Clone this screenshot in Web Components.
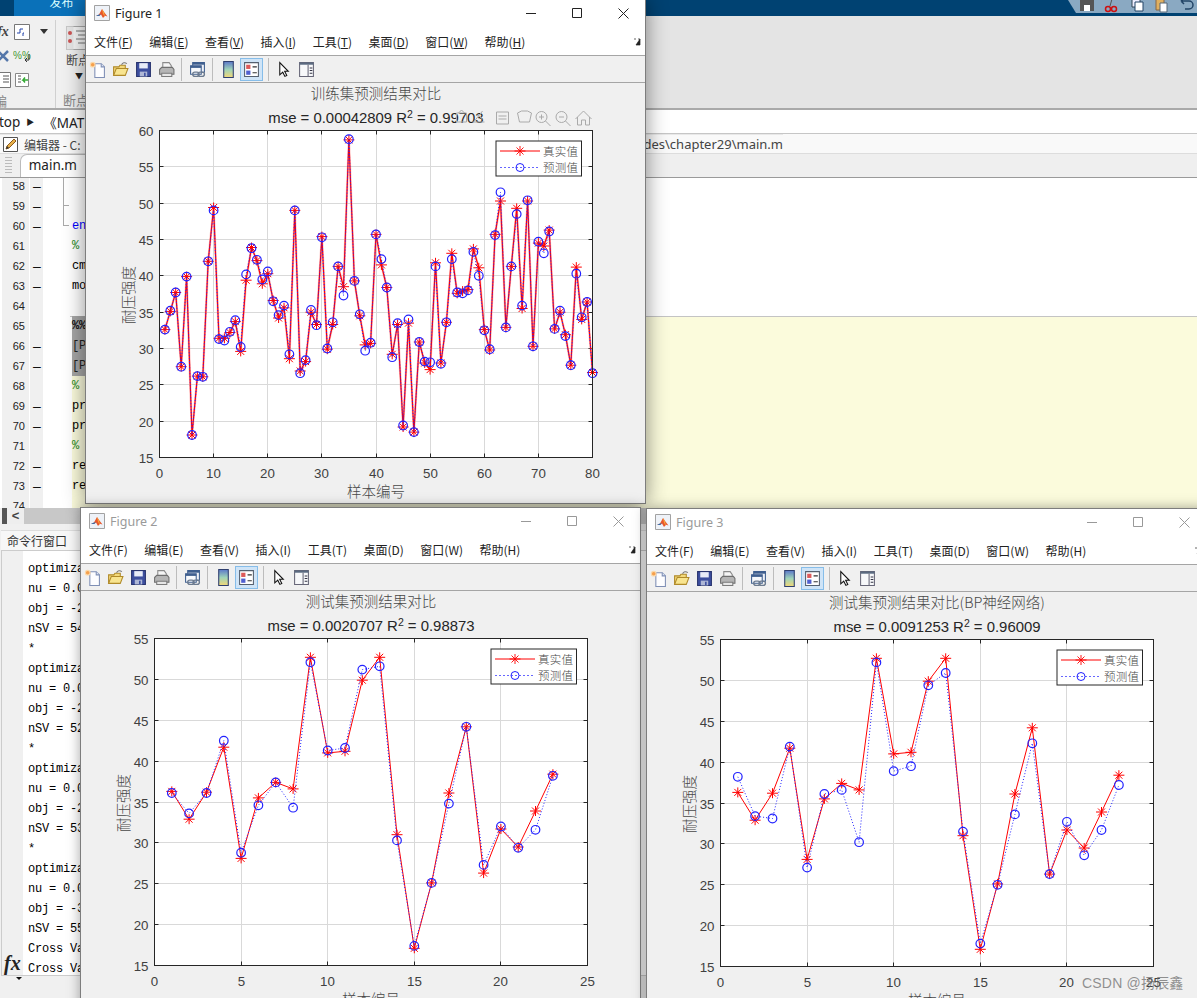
<!DOCTYPE html>
<html lang="zh">
<head>
<meta charset="utf-8">
<title>MATLAB Figures</title>
<style>
  html, body { margin: 0; background: #f0f0f0; overflow: hidden; }
</style>
</head>
<body>
<ml-desktop>
  <ml-ribbon></ml-ribbon>
  <ml-address></ml-address>
  <ml-editor></ml-editor>
  <ml-command></ml-command>
  <fig-window name="Figure 1" x="85" y="-1" h="505" active>
    <fig-plot series="train" x-max="80" x-step="10" y-max="60" tools
      heading="训练集预测结果对比" mse="0.00042809" r2="0.99703"></fig-plot>
  </fig-window>
  <fig-window name="Figure 2" x="80" y="507" h="520">
    <fig-plot series="test" x-max="25" x-step="5" y-max="55"
      heading="测试集预测结果对比" mse="0.0020707" r2="0.98873"></fig-plot>
  </fig-window>
  <fig-window name="Figure 3" x="646" y="508" h="520">
    <fig-plot series="bp" x-max="25" x-step="5" y-max="55"
      heading="测试集预测结果对比(BP神经网络)" mse="0.0091253" r2="0.96009"></fig-plot>
  </fig-window>
  <ml-watermark>CSDN @扬辰鑫</ml-watermark>
</ml-desktop>

<script>
const CJK = '"Noto Sans CJK SC", "Noto Sans", sans-serif';
const MONO = '"Liberation Mono", monospace';

// measured from the reference: [real, predicted]
const TRAIN_REAL = [32.6,35.1,37.7,27.5,39.9,18.1,26.2,26.1,42,49.4,31.4,31.4,32.2,33.7,29.6,39.4,43.9,42.1,38.9,40.3,36.6,34.2,35.6,28.6,49,26.9,28.2,35,33.3,45.4,29.9,33.3,41.3,38.5,58.7,39.3,34.5,30.5,30.7,45.7,41.5,38.4,29.2,33.3,19.2,33.5,18.5,30.9,28,27.1,41.8,28,33.6,43.1,37.6,37.9,38.1,43.7,41.1,32.6,29.8,45.7,50.3,32.9,41.3,49.3,35.5,50.3,30.3,44.5,44.1,46.3,32.7,35,31.9,27.7,41.2,34,36.4,26.7];
const TRAIN_PRED = [32.6,35.2,37.7,27.5,39.9,18.1,26.2,26.1,42,49,31.3,31.1,32.3,33.9,30.2,40.2,43.8,42.2,39.5,40.6,36.5,34.6,35.9,29.2,49,26.6,28.4,35.3,33.2,45.3,30,33.6,41.3,37.3,58.8,39.3,34.7,29.7,30.8,45.7,42.3,38.4,28.8,33.5,19.4,34,18.5,30.9,28.2,28.1,41.3,27.9,33.6,42.3,37.7,37.6,38,43.3,40,32.5,29.9,45.6,51.5,32.9,41.3,48.5,35.9,50.4,30.3,44.7,43.1,46.1,32.7,35.2,31.7,27.7,40.3,34.3,36.4,26.6];
const TEST_REAL = [36.3,32.9,36.2,41.7,28.1,35.5,37.4,36.6,52.7,41,41.2,49.9,52.7,31,17.1,25.1,36.1,44.2,26.3,31.7,29.5,33.9,38.4];
const TEST_PRED = [36.1,33.6,36.1,42.5,28.8,34.6,37.4,34.3,52.1,41.3,41.6,51.2,51.6,30.3,17.4,25.1,34.8,44.2,27.3,32,29.4,31.6,38.2];
const BP_PRED = [38.2,33.4,33.1,41.9,27.1,36.1,36.6,30.2,52.2,38.9,39.5,49.4,50.9,31.5,17.8,25,33.6,42.3,26.3,32.7,28.6,31.7,37.2];
const SERIES = {
  train: [TRAIN_REAL, TRAIN_PRED],
  test: [TEST_REAL, TEST_PRED],
  bp: [TEST_REAL, BP_PRED],
};

const FIG_ICONS = {
  new: `<path d="M5.5 2.5h6l3 3v10h-9z" fill="#fdfdff" stroke="#7f8fb5"/><path d="M11.5 2.5v3h3" fill="#dfe6f5" stroke="#7f8fb5"/><circle cx="3.5" cy="3.5" r="2.2" fill="#f6a04d" stroke="#fbd9a8"/>`,
  open: `<path d="M1.5 13.5v-8h5l1-1.5h5v3" fill="#f3d97a" stroke="#b08a2a"/><path d="M1.5 13.5l2.5-6.5h11l-2.5 6.5z" fill="#f8e48f" stroke="#b08a2a"/><path d="M9 3.5c1-2 3-2.500 5-1" fill="none" stroke="#777"/>`,
  save: `<path d="M1.500 1.500h13v13h-13z" fill="#3d4f9f" stroke="#29356f"/><path d="M4 2h8v5h-8z" fill="#e8ecf8"/><path d="M4.500 10h7v4.500h-7z" fill="#aeb7d6"/><path d="M8.500 11h1.500v3h-1.500z" fill="#3d4f9f"/>`,
  print: `<path d="M4.500 1.500h6l2 3v3h-8z" fill="#f5f5f5" stroke="#8a8a8a"/><path d="M1.500 8l2-2h10l1.500 2v4.500h-13.500z" fill="#b5b5b5" stroke="#6f6f6f"/><path d="M3.500 11.500h9.500v3h-9.500z" fill="#e6e6e6" stroke="#7b7b7b"/>`,
  link: `<path d="M3.500 1.500h11v9h-11z" fill="#eef1f7" stroke="#3f5f8f"/><path d="M3.500 1.500h11v2h-11z" fill="#3f5f8f"/><path d="M1.500 4.500h10v8h-10z" fill="#f7f9fc" stroke="#3f5f8f"/><path d="M1.500 4.500h10v2h-10z" fill="#3f5f8f"/><rect x="3.500" y="10.500" width="6" height="4" rx="2" fill="none" stroke="#6c7b8f" stroke-width="1.300"/><rect x="8.500" y="10.500" width="6" height="4" rx="2" fill="none" stroke="#6c7b8f" stroke-width="1.300"/>`,
  colorbar: `<defs><linearGradient id="cb" x1="0" y1="0" x2="0" y2="1"><stop offset="0" stop-color="#5b78c9"/><stop offset=".5" stop-color="#9fd3b8"/><stop offset="1" stop-color="#f1d878"/></linearGradient></defs><path d="M3.500 .500h9v15h-9z" fill="url(#cb)" stroke="#2f3f6f"/>`,
  legend: `<path d="M1.500 1.500h13v13h-13z" fill="#fff" stroke="#55606f"/><path d="M3 3.500h4v4h-4z" fill="#dd5a5a"/><path d="M3 9h4v4h-4z" fill="#5060d0"/><path d="M9 5.500h4M9 11h4" stroke="#333"/>`,
  arrow: `<path d="M4.500 1.500v11.500l2.800-2.500 2 4 1.800-.8-2-4h3.400z" fill="#fff" stroke="#111"/>`,
  panel: `<path d="M1.500 1.500h13v13h-13z" fill="#f7f8fa" stroke="#667"/><path d="M1.500 1.500h13v2h-13z" fill="#5a6a80"/><path d="M9.500 3.500v11" stroke="#667"/><path d="M11 6.500h2.500M11 9h2.500M11 11.500h2.500" stroke="#334"/>`,
};

/** 背景：顶部功能区 */
class MlRibbon extends HTMLElement {
  connectedCallback() {
    this.attachShadow({ mode: 'open' }).innerHTML = `
    <style>
      :host { display: block; height: 110px; background: #e4e4e4; font: 12px ${CJK}; color: #444; overflow: hidden; }
      .tabs { height: 16px; background: #004272; position: relative; }
      .publish { position: absolute; left: 14px; top: 0; width: 71px; height: 16px; background: #0a71b9;
        color: #dff; text-align: center; line-height: 8px; font-size: 12px; padding-left: 24px; box-sizing: border-box; }
      .publish span { display: block; margin-top: -2px; }
      .qat { position: absolute; left: 1068px; right: 0; top: 0; height: 13px; background: #8aa9c2;
        clip-path: polygon(0 0, 100% 0, 100% 100%, 8px 100%); }
      .qat svg { position: absolute; top: -3px; }
      .body { height: 92px; display: flex; background: linear-gradient(90deg, #f0f0f0 640px, #e4e4e4 640px); border-bottom: 2px solid #a9a9a9; box-sizing: content-box; }
      .group { width: 55px; height: 88px; flex: none; border-right: 1px solid #d0d0d0; margin-top: 4px; display: flex; flex-direction: column; justify-content: space-between; }
      .grid { display: grid; grid-template-columns: 19px 19px 24px; grid-auto-rows: 24px; margin: 0 0 0 -6.5px; place-items: center; }
      .grp-name { color: #888; font-size: 13px; line-height: 17px; text-align: left; margin-left: -6px; }
      .bp { width: 60px; flex: none; margin-left: 10px; display: flex; flex-direction: column; align-items: flex-start; padding-top: 10px; height: 82px; }
      .bp .t { margin-top: 2px; line-height: 16px; }
      .bp .arr { font-size: 8px; margin-left: 9px; margin-top: 2px; color: #222; }
      .bp .n { margin-top: auto; margin-left: -3px; color: #888; font-size: 13px; line-height: 17px; }
    </style>
    <div class="tabs">
      <div class="publish"><span>发布</span></div>
      <div class="qat">
        <svg style="left:10px" width="18" height="16" viewBox="0 0 18 16"><path d="M2 2h14v12h-14z" fill="#555"/><path d="M6 8h6v6h-6z" fill="#fff"/></svg>
        <svg style="left:36px" width="14" height="16" viewBox="0 0 14 16"><path d="M8 2l-2 7" stroke="#555"/><circle cx="4" cy="12" r="2.500" fill="none" stroke="#c11" stroke-width="1.500"/><circle cx="10" cy="12" r="2.500" fill="none" stroke="#c11" stroke-width="1.500"/></svg>
        <svg style="left:62px" width="14" height="16" viewBox="0 0 14 16"><path d="M2 2h8v8h-8z" fill="#eef" stroke="#345"/><path d="M5 5h8v9h-8z" fill="#fff" stroke="#246"/></svg>
        <svg style="left:86px" width="14" height="16" viewBox="0 0 14 16"><path d="M2 2h8v11h-8z" fill="#e0b060" stroke="#864"/><path d="M6 6h7v9h-7z" fill="#fff" stroke="#567"/></svg>
        <svg style="left:108px" width="18" height="16" viewBox="0 0 18 16"><path d="M5 4h8a3.500 3.500 0 0 1 0 8h-4M5 4l3-3M5 4l3 3" fill="none" stroke="#246" stroke-width="1.500"/></svg>
      </div>
    </div>
    <div class="body">
      <div class="group">
        <div class="grid">
          <span style="font:italic bold 14px 'Liberation Serif'">fx</span>
          <svg width="16" height="16" viewBox="0 0 16 16"><path d="M.5.500h15v15h-15z" fill="#fff" stroke="#777"/><path d="M3 9h3V5h3M9 12V9h1" fill="none" stroke="#24a"/></svg>
          <svg width="10" height="6" viewBox="0 0 10 6"><path d="M1 0h8L5 5z" fill="#333"/></svg>
          <svg width="16" height="16" viewBox="0 0 16 16"><path d="M3 3l10 10M13 3L3 13" stroke="#57a" stroke-width="2.500"/></svg>
          <svg width="18" height="16" viewBox="0 0 18 16"><text x="0" y="11" font-size="10" fill="#493" font-family="Liberation Sans">%%</text><path d="M12 12h4V6M12 12l2-2M12 12l2 2" fill="none" stroke="#333"/></svg>
          <span></span>
          <svg width="16" height="16" viewBox="0 0 16 16"><path d="M.5.500h15v15h-15z" fill="#fff" stroke="#777"/><path d="M8 4h6M8 7h6M8 10h6" stroke="#555"/></svg>
          <svg width="16" height="16" viewBox="0 0 16 16"><path d="M1.500 1.500h13v13h-13z" fill="#fff" stroke="#888"/><path d="M4 4h3M4 7h3M4 10h3" stroke="#555"/><path d="M14 8H9l2-2.500M9 8l2 2.500" fill="none" stroke="#3a3" stroke-width="1.500"/></svg>
        </div>
        <div class="grp-name">编</div>
      </div>
      <div class="bp">
        <svg width="24" height="24" viewBox="0 0 24 24"><path d="M.5.500h23v23h-23z" fill="#f7f7f7" stroke="#aaa"/><path d="M.5.500h7v23h-7z" fill="#e6e6e6"/><circle cx="4" cy="7" r="2" fill="#c55"/><circle cx="4" cy="15" r="2" fill="#c55"/><path d="M10 5h11M12 9h9M10 13h11M12 17h9" stroke="#777"/></svg>
        <span class="t">断点</span><span class="arr">▼</span><span class="n">断点</span>
      </div>
    </div>`;
  }
}

/** 背景：地址栏 */
class MlAddress extends HTMLElement {
  connectedCallback() {
    this.attachShadow({ mode: 'open' }).innerHTML = `
    <style>
      :host { display: flex; height: 23px; background: #fff; border-bottom: 1px solid #c6c6c6; box-sizing: content-box;
        align-items: center; font: 13.500px "Noto Sans", ${CJK}; color: #222; overflow: hidden; white-space: nowrap; }
      .c { margin-left: -1px; }
      i { font-style: normal; font-size: 8px; margin: 0 9px 0 6px; }
    </style>
    <span class="c">top</span><i>▶</i><span>《MATLAB</span>`;
  }
}

/** 背景：编辑器，带行号和代码折叠线 */
class MlEditor extends HTMLElement {
  connectedCallback() {
    const rows = [
      [58, 1, ''], [59, 1, ''], [60, 1, 'en', 'kw'], [61, 0, '%', 'cm'], [62, 1, 'cm'], [63, 1, 'mo'], [64, 0, ''],
      [65, 0, '%%', 'cell'], [66, 1, '[P', 'sel'], [67, 1, '[P', 'sel'], [68, 0, '%', 'cm'], [69, 1, 'pr'], [70, 1, 'pr'],
      [71, 0, '%', 'cm'], [72, 1, 're'], [73, 1, 're'], [74, 0, ''],
    ];
    const html = rows.map(([n, dash, code, cls]) => `
      <div class="row ${n >= 65 ? 'yellow' : ''} ${n === 65 ? 'first' : ''}">
        <span class="num">${n}</span><span class="dash">${dash ? '–' : ''}</span>
        <span class="fold f${n}"></span>
        <span class="code ${cls || ''}">${code}</span>
      </div>`).join('');
    this.attachShadow({ mode: 'open' }).innerHTML = `
    <style>
      :host { display: block; font: 12px ${CJK}; color: #444; background: #fff; }
      .title { height: 19px; background: #f9f9f9; border-top: 1px solid #e8e8e8; box-sizing: border-box; display: flex; align-items: center; justify-content: space-between; width: 783px; padding-left: 2px; }
      .title span:first-of-type { margin-left: 5px; margin-right: auto; }
      .path { font: 13px "Noto Sans", sans-serif; color: #444; }
      .titlewrap { background: #f9f9f9; border-bottom: 1px solid #ddd; }
      .tabs { height: 23px; background: #efefef; border-bottom: 1px solid #9a9a9a; display: flex; align-items: flex-end; padding-left: 5px; box-sizing: content-box; }
      .grip { width: 7px; height: 16px; margin-bottom: 4px; background: repeating-linear-gradient(#bbb 0 1px, transparent 1px 3px); }
      .tab { width: 56px; height: 22px; margin-left: 8px; background: #fff; border: 1px solid #bbb; border-bottom: 0; border-top-left-radius: 7px;
        font: 13.500px "Noto Sans", sans-serif; color: #222; text-align: right; padding-right: 8px; box-sizing: content-box; line-height: 21px; }
      .body { height: 330px; overflow: hidden; padding-top: 0; }
      .rows { margin-top: -2px; }
      .row { display: flex; height: 20px; align-items: center; position: relative; }
      .num { flex: none; height: 20px; background: #f0f0f0; text-align: right; font: 11px/20px "Liberation Sans", sans-serif; color: #222; border-left: 2px solid #fff; box-sizing: border-box; width: 29px; padding-right: 4px; }
      .dash { width: 13px; margin-left: 1px; flex: none; height: 20px; background: #f0f0f0; font: 14px/20px "Liberation Sans", sans-serif; color: #111; padding-left: 3px; box-sizing: border-box; }
      .fold { width: 29px; flex: none; height: 20px; position: relative; }
      .f58::before, .f59::before, .f60::before { content: ""; position: absolute; left: 20px; top: 0; bottom: 0; border-left: 1px solid #aaa; }
      .f60::before { bottom: 10px; }
      .f59::after, .f60::after { content: ""; position: absolute; left: 20px; top: 9px; width: 6px; border-top: 1px solid #aaa; }
      .code { font: 12px/20px ${MONO}; letter-spacing: -.2px; color: #000; flex: 1; height: 20px; }
      .kw { color: #00f; }
      .cm { color: #228b22; }
      .cell, .sel { flex: none; width: 100px; background: #a6a6a6; color: #222; }
      .cell { font-weight: bold; color: #111; }
      .yellow { background: linear-gradient(90deg, transparent 72px, #fbfbdc 72px); }
      .first { background: linear-gradient(#c4c4c4, #c4c4c4) 70px 0 / 100% 1px no-repeat, linear-gradient(90deg, transparent 72px, #fbfbdc 72px); }
    </style>
    <div class="titlewrap"><div class="title">
      <svg width="17" height="17" viewBox="0 0 17 17"><path d="M1.500 1.500h14v14h-14z" fill="#fff" stroke="#555"/><path d="M4 13l1-3 7-7 2 2-7 7z" fill="#e8b048" stroke="#8a5a20"/><path d="M4 13l1-3 2 2z" fill="#333"/></svg>
      <span>编辑器 - C:</span><span class="path">codes\\chapter29\\main.m</span>
    </div></div>
    <div class="tabs"><div class="grip"></div><div class="tab">main.m</div></div>
    <div class="body"><div class="rows">${html}</div></div>`;
  }
}

/** 背景：滚动条和命令行窗口 */
class MlCommand extends HTMLElement {
  connectedCallback() {
    const group = (sv, obj) => ['optimiza', 'nu = 0.0', `obj = -${obj}`, `nSV = ${sv}`];
    const lines = [...group(54, 2), '*', ...group(52, 2), '*', ...group(53, 2), '*', ...group(55, 3), 'Cross Va', 'Cross Va'];
    this.attachShadow({ mode: 'open' }).innerHTML = `
    <style>
      :host { display: flex; flex-direction: column; flex: 1; min-height: 0; position: relative; background: #f0f0f0; font: 12px ${CJK}; color: #333; overflow: hidden; }
      .bar { height: 16px; display: flex; margin-left: 2px; flex: none; }
      .bar b { width: 5px; background: #555; }
      .bar i { width: 17px; background: #eee; font: bold 13px/16px "Liberation Sans"; text-align: center; color: #444; }
      .bar u { flex: 1; background: #c8c8c8; }
      .name { margin-top: 6px; height: 19px; line-height: 19px; padding-left: 6px; background: #f7f7f7; border-top: 1px solid #ddd; border-bottom: 1px solid #ccc; flex: none; box-sizing: content-box; margin-left: 1px; }
      .out { height: 425px; flex: none; box-sizing: border-box; margin-left: 1px; border-left: 1px solid #ccc; border-bottom: 1px solid #ccc;
        background: linear-gradient(90deg, #f0f0f0 21px, #fff 21px); padding: 8px 0 0 26px; }
      .out div { font: 12px/20px ${MONO}; letter-spacing: -.2px; color: #000; height: 20px; white-space: pre; }
      .fx { position: absolute; left: 4px; top: 444px; font: italic bold 20px "Liberation Serif", serif; color: #222; }
      .fx::after { content: ""; position: absolute; left: 12px; top: 25px; border: 3px solid transparent; border-top-color: #111; }
    </style>
    <div class="bar"><b></b><i>&lt;</i><u></u></div>
    <div class="name">命令行窗口</div>
    <div class="out">${lines.map(l => `<div>${l}</div>`).join('')}</div>
    <span class="fx">fx</span>`;
  }
}

/** Figure 窗口：标题栏、菜单、工具栏 */
class FigWindow extends HTMLElement {
  connectedCallback() {
    const active = this.hasAttribute('active');
    this.style.left = this.getAttribute('x') + 'px';
    this.style.top = this.getAttribute('y') + 'px';
    this.style.height = this.getAttribute('h') + 'px';
    const menu = [['文件', 'F'], ['编辑', 'E'], ['查看', 'V'], ['插入', 'I'], ['工具', 'T'], ['桌面', 'D'], ['窗口', 'W'], ['帮助', 'H']];
    const icon = (name, on) => `<span class="tool ${on ? 'on' : ''}"><svg width="17" height="17" viewBox="0 0 16 16">${FIG_ICONS[name]}</svg></span>`;
    this.attachShadow({ mode: 'open' }).innerHTML = `
    <style>
      :host { display: block; position: absolute; width: 561px; box-sizing: border-box; background: #f0f0f0;
        border: 1px solid #7d7d7d; box-shadow: 0 0 ${active ? 20 : 12}px rgba(0,0,0,${active ? .45 : .35}); font: 12px ${CJK}; }
      .title { height: 28px; background: #fff; display: flex; align-items: center; padding: 0 0 2px 8px; box-sizing: border-box; color: ${active ? '#222' : '#9a9a9a'}; font-size: 12.500px; }
      .title svg.logo { margin-right: 5px; }
      .title .name { flex: 1; font-family: "Noto Sans", sans-serif; }
      .btn { width: 46px; height: 26px; display: flex; align-items: center; justify-content: center; }
      .btn:last-child { margin-right: -1px; }
      .menu { height: 27px; background: #fff; border-bottom: 1px solid #a5a5a5; display: flex; align-items: center; gap: 16.500px; padding-left: 8px; color: #222; position: relative; white-space: nowrap; box-sizing: content-box; }
      .menu u { text-decoration: ${active ? 'underline' : 'none'}; }
      .menu .more { position: absolute; right: 4px; top: 10px; }
      .bar { height: 26px; border-bottom: 1px solid #a5a5a5; display: flex; align-items: center; box-sizing: content-box; }
      .tool { width: 23px; height: 23px; display: flex; align-items: center; justify-content: center; box-sizing: border-box; flex: none; }
      .tool.on { background: #cfe4f7; border: 1px solid #86bde9; }
      .sep { width: 1px; height: 23px; background: #bcbcbc; flex: none; }
    </style>
    <div class="title">
      <svg class="logo" width="16" height="16" viewBox="0 0 16 16"><path d="M.5.500h15v15h-15z" fill="#eef2f8" stroke="#a2a2a2"/><path d="M2 11l3-1.500L8 4l2 3 3.500 4.500-2.500-.8L9 13 7 9.500 5 11z" fill="#e8562a"/><path d="M2 11l3-1.500L7 9.500 5 11z" fill="#2a6fb4"/><path d="M8 4l2 3 1 5-2-3z" fill="#f6a03a"/></svg>
      <span class="name">${this.getAttribute('name')}</span>
      <span class="btn"><svg width="10" height="10"><path d="M0 5.500h10" stroke="${active ? '#222' : '#999'}"/></svg></span>
      <span class="btn"><svg width="10" height="10"><path d="M.5.500h9v9h-9z" fill="none" stroke="${active ? '#222' : '#999'}"/></svg></span>
      <span class="btn"><svg width="11" height="11"><path d="M.5.500l10 10M10.500.500l-10 10" stroke="${active ? '#222' : '#999'}"/></svg></span>
    </div>
    <div class="menu">
      ${menu.map(([t, k]) => `<span>${t}(<u>${k}</u>)</span>`).join('')}
      <svg class="more" width="8" height="8"><path d="M1 1h2M5 1l2 0M7 1v6L3 7z" fill="#222" stroke="#222" stroke-width=".7"/></svg>
    </div>
    <div class="bar">
      ${icon('new')}${icon('open')}${icon('save')}${icon('print')}
      <span style="width:3px"></span><span class="sep"></span><span style="width:4px"></span>
      ${icon('link')}
      <span style="width:3px"></span><span class="sep"></span><span style="width:4px"></span>
      ${icon('colorbar')}${icon('legend', true)}
      <span style="width:5px"></span><span class="sep"></span><span style="width:3px"></span>
      ${icon('arrow')}${icon('panel')}
    </div>
    <slot></slot>`;
  }
}

/** 绘图区：坐标轴、网格、两条曲线和图例 */
class FigPlot extends HTMLElement {
  connectedCallback() {
    const L = 73.5, T = 47.5, W = 433, H = 327, R = L + W, B = T + H;
    const xMax = +this.getAttribute('x-max');
    const xStep = +this.getAttribute('x-step');
    const yMin = 15;
    const yMax = +this.getAttribute('y-max');
    const [real, pred] = SERIES[this.getAttribute('series')];
    const dense = real.length > 40;
    const px = i => L + (i / xMax) * W;
    const py = v => B - ((v - yMin) / (yMax - yMin)) * H;

    let grid = '', ticks = '', labels = '';
    for (let x = 0; x <= xMax; x += xStep) {
      const p = Math.round(px(x) - .5) + .5;
      if (x && x < xMax) grid += `<path d="M${p} ${T}V${B}"/>`;
      if (x && x < xMax) ticks += `<path d="M${p} ${T}v4M${p} ${B}v-4"/>`;
      labels += `<text x="${p}" y="${B + 20}" text-anchor="middle">${x}</text>`;
    }
    for (let y = yMin; y <= yMax; y += 5) {
      const p = Math.round(py(y) - .5) + .5;
      if (y > yMin && y < yMax) grid += `<path d="M${L} ${p}H${R}"/>`;
      if (y > yMin && y < yMax) ticks += `<path d="M${L} ${p}h4M${R} ${p}h-4"/>`;
      labels += `<text x="${L - 6}" y="${p + 5}" text-anchor="end">${y}</text>`;
    }
    const line = vals => vals.map((v, i) => `${i ? 'L' : 'M'}${px(i + 1).toFixed(1)} ${py(v).toFixed(1)}`).join('');
    const star = (x, y) => `<path d="M${x - 5.5} ${y}h11M${x} ${y - 5}v10M${x - 3.5} ${y - 3.5}l7 7M${x - 3.5} ${y + 3.5}l7-7"/>`;
    const stars = real.map((v, i) => star(+px(i + 1).toFixed(1), +py(v).toFixed(1))).join('');
    const circles = pred.map((v, i) => `<circle cx="${px(i + 1).toFixed(1)}" cy="${py(v).toFixed(1)}" r="4.300"/>`).join('');

    const lx = R - 96.5, ly = T + 10.5;
    const legend = `
      <rect x="${lx}" y="${ly}" width="85.500" height="35" fill="#fff" stroke="#262626"/>
      <path d="M${lx + 4} ${ly + 10}h40" stroke="#f00" fill="none"/>
      <g stroke="#f00" fill="none" stroke-width=".9">${star(lx + 24, ly + 10)}</g>
      <path d="M${lx + 4} ${ly + 26.5}h40" stroke="#66f" stroke-dasharray="2 2" fill="none"/>
      <circle cx="${lx + 24}" cy="${ly + 26.5}" r="4" fill="none" stroke="#22f"/>
      <g class="cn legend"><text x="${lx + 47}" y="${ly + 14.500}" textLength="35">真实值</text><text x="${lx + 47}" y="${ly + 31}" textLength="35">预测值</text></g>`;

    const tools = !this.hasAttribute('tools') ? '' : `
      <g fill="none" stroke="#aaa">
        <path d="M${L + 297} 30h10v9h-10zM${L + 299} 30l3-3 3 3"/>
        <path d="M${L + 315} 38l8-10M${L + 313} 39h12M${L + 318} 32l5 4"/>
        <path d="M${L + 337} 29h12v12h-12zM${L + 339} 33h8M${L + 339} 36h8"/>
        <path d="M${L + 358} 30l4-2h6l4 2-2 9h-10z"/>
        <circle cx="${L + 382}" cy="34" r="5.500"/><path d="M${L + 386} 38l5 5M${L + 379.500} 34h5M${L + 382} 31.500v5"/>
        <circle cx="${L + 402}" cy="34" r="5.500"/><path d="M${L + 406} 38l5 5M${L + 399.500} 34h5"/>
        <path d="M${L + 416} 36l8-8 8 8M${L + 418} 34v8h4v-5h4v5h4v-8"/>
      </g>`;

    this.attachShadow({ mode: 'open' }).innerHTML = `
    <style>
      :host { display: block; height: 421px; }
      svg { display: block; overflow: hidden; }
      text { font: 13.300px "Liberation Sans", sans-serif; fill: #404040; }
      .cn text, text.cn { font: 14.500px ${CJK}; fill: #484848; font-weight: 300; }
      .legend text { font-size: 11.500px; fill: #484848; }
      .grid { stroke: #d9d9d9; fill: none; }
      .ticks { stroke: #262626; fill: none; }
      .main { font-size: 14.900px; fill: #262626; }
      .main tspan { font-size: 10.500px; }
      .series { filter: blur(.25px); fill: none; }
    </style>
    <svg width="559" height="421" viewBox="0 0 559 421">
      <text class="cn" x="${L + W / 2}" y="16" text-anchor="middle">${this.getAttribute('heading')}</text>
      <text class="main" x="${L + W / 2}" y="40" text-anchor="middle">mse = ${this.getAttribute('mse')} R<tspan dy="-5">2</tspan><tspan dy="5" style="font-size:14.900px"> = ${this.getAttribute('r2')}</tspan></text>
      ${tools}
      <rect x="${L}" y="${T}" width="${W}" height="${H}" fill="#fff"/>
      <g class="grid">${grid}</g>
      <g class="ticks">${ticks}</g>
      <g class="series">
        ${dense ? `<path d="${line(real)}" stroke="#ff8f8f" stroke-width="2.400" opacity=".5"/>` : ''}
        <path d="${line(real)}" stroke="#f00" stroke-width="${dense ? 1.2 : 1}"/>
        <g stroke="#f00" stroke-width="1">${stars}</g>
        <path d="${line(pred)}" stroke="#22f" stroke-width="1" stroke-dasharray="1 2"/>
        <g stroke="#22f" stroke-width="1.200">${circles}</g>
      </g>
      <rect x="${L}" y="${T}" width="${W}" height="${H}" fill="none" stroke="#262626"/>
      ${legend}
      <g>${labels}</g>
      <text class="cn" x="${L + W / 2}" y="${B + 39}" text-anchor="middle">样本编号</text>
      <text class="cn" transform="translate(41 ${T + H / 2 + 1}) rotate(-90)" text-anchor="middle" dominant-baseline="central">耐压强度</text>
    </svg>`;
  }
}

/** 桌面容器：背景按流式排布，Figure 窗口浮在上面 */
class MlDesktop extends HTMLElement {
  connectedCallback() {
    this.attachShadow({ mode: 'open' }).innerHTML = `
    <style>
      :host { display: flex; flex-direction: column; position: relative; width: 1197px; height: 998px; overflow: hidden; }
    </style>
    <slot></slot>`;
  }
}

/** 右下角水印 */
class MlWatermark extends HTMLElement {
  connectedCallback() {
    this.attachShadow({ mode: 'open' }).innerHTML = `
    <style>
      :host { position: absolute; left: 1082px; top: 972px; font: 14px "Liberation Sans", ${CJK}; color: rgba(110,110,110,.75); letter-spacing: .2px; white-space: nowrap; }
    </style>
    <slot></slot>`;
  }
}

customElements.define('ml-ribbon', MlRibbon);
customElements.define('ml-address', MlAddress);
customElements.define('ml-editor', MlEditor);
customElements.define('ml-command', MlCommand);
customElements.define('fig-window', FigWindow);
customElements.define('fig-plot', FigPlot);
customElements.define('ml-desktop', MlDesktop);
customElements.define('ml-watermark', MlWatermark);
</script>
</body>
</html>
